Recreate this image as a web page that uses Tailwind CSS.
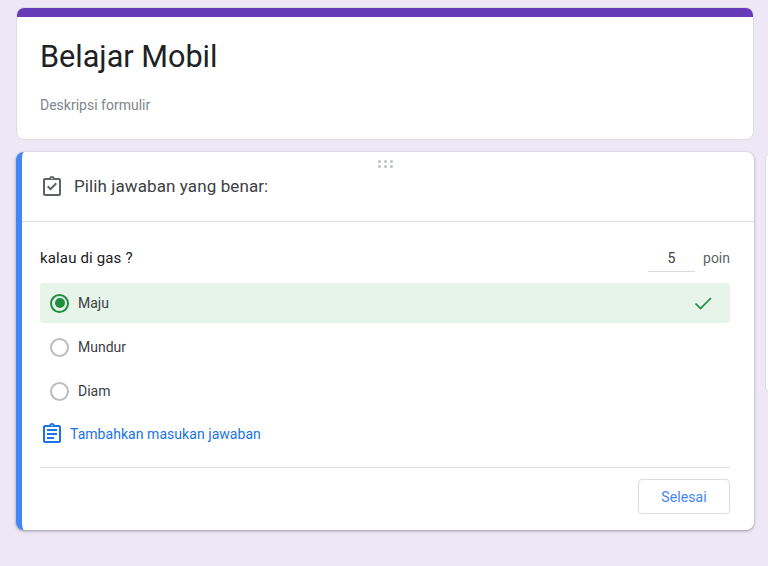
<!DOCTYPE html>
<html>
<head>
<meta charset="utf-8">
<script src="https://cdn.jsdelivr.net/npm/@tailwindcss/browser@4"></script>
</head>
<body class="m-0 h-[566px] w-[768px] overflow-hidden bg-[#ede7f6] font-['Roboto',sans-serif] text-[#202124]">
<div class="flex items-start pt-[7px] pl-4">
  <main class="flex w-[738px] shrink-0 flex-col gap-[12px]">
    <section class="h-[133px] overflow-hidden rounded-lg border border-[#dadce0] bg-white">
      <div class="-mx-px -mt-px h-[10px] bg-[#673ab7]"></div>
      <h1 class="mt-[20px] ml-[23px] text-[30.6px] leading-[40px] font-normal text-[#202124]">Belajar Mobil</h1>
      <p class="mt-[18px] ml-[23px] text-sm leading-5 text-[#80868b]">Deskripsi formulir</p>
    </section>
    <section class="relative h-[378px] rounded-lg border-l-[6px] border-[#4285f4] bg-white shadow-[0_1px_2px_0_rgba(60,64,67,0.3),0_1px_3px_1px_rgba(60,64,67,0.15)]">
      <div class="absolute top-[8px] left-[356px] grid grid-cols-3 gap-x-[3px] gap-y-[2px]">
        <i class="size-[3px] rounded-full bg-[#bdc1c6]"></i><i class="size-[3px] rounded-full bg-[#bdc1c6]"></i><i class="size-[3px] rounded-full bg-[#bdc1c6]"></i>
        <i class="size-[3px] rounded-full bg-[#bdc1c6]"></i><i class="size-[3px] rounded-full bg-[#bdc1c6]"></i><i class="size-[3px] rounded-full bg-[#bdc1c6]"></i>
      </div>
      <div class="flex h-[70px] items-center gap-[10px] border-b border-[#dadce0] pl-[18px]">
        <svg class="size-6 shrink-0" viewBox="0 0 24 24" fill="#5f6368"><path d="M19 3h-4.18C14.4 1.84 13.3 1 12 1s-2.4.84-2.82 2H5c-1.1 0-2 .9-2 2v14c0 1.1.9 2 2 2h14c1.1 0 2-.9 2-2V5c0-1.1-.9-2-2-2zm-7-.25c.41 0 .75.34.75.75s-.34.75-.75.75-.75-.34-.75-.75.34-.75.75-.75zM19 19H5V5h14v14zm-8.5-3.5-3.5-3.5 1.4-1.4 2.1 2.1 5.1-5.1 1.4 1.4z"/></svg>
        <h2 class="-mt-px text-[17px] leading-6 font-normal tracking-[0.1px] text-[#3c4043]">Pilih jawaban yang benar:</h2>
      </div>
      <div class="pr-[24px] pl-[18px]">
        <div class="flex h-[61px] items-center justify-between pt-[11px]">
          <span class="text-[15px] tracking-[0.15px] text-[#202124]">kalau di gas ?</span>
          <div class="flex items-center gap-2">
            <span class="block h-[28px] w-[47px] border-b border-[#dadce0] text-center text-sm leading-[29px] text-[#3c4043]">5</span>
            <span class="text-sm text-[#5f6368]">poin</span>
          </div>
        </div>
        <div class="flex h-10 items-center rounded-[3px] bg-[#e6f4ea] pr-[15px] pl-[10px]">
          <span class="flex size-[19px] items-center justify-center rounded-full border-2 border-[#1e8e3e]"><span class="size-[10px] rounded-full bg-[#1e8e3e]"></span></span>
          <span class="ml-[9px] flex-1 text-sm text-[#3c4043]">Maju</span>
          <svg class="size-6" viewBox="0 0 24 24" fill="none" stroke="#1e8e3e" stroke-width="1.7"><path d="M4.5 12.5l5 5L20 7"/></svg>
        </div>
        <div class="mt-[2px] flex h-11 items-center pl-[10px]">
          <span class="size-[19px] rounded-full border-2 border-[#bdbdbd]"></span>
          <span class="ml-[9px] text-sm text-[#3c4043]">Mundur</span>
        </div>
        <div class="flex h-11 items-center pl-[10px]">
          <span class="size-[19px] rounded-full border-2 border-[#bdbdbd]"></span>
          <span class="ml-[9px] text-sm text-[#3c4043]">Diam</span>
        </div>
        <div class="mt-[1px] flex h-[40px] items-center gap-[6px]">
          <svg class="size-6 shrink-0" viewBox="0 0 24 24" fill="#1a73e8"><path d="M19 3h-4.18C14.4 1.84 13.3 1 12 1s-2.4.84-2.82 2H5c-1.1 0-2 .9-2 2v14c0 1.1.9 2 2 2h14c1.1 0 2-.9 2-2V5c0-1.1-.9-2-2-2zm-7-.25c.41 0 .75.34.75.75s-.34.75-.75.75-.75-.34-.75-.75.34-.75.75-.75zM19 19H5V5h14v14zM7 7h10v2H7zm0 4h10v2H7zm0 4h7v2H7z"/></svg>
          <span class="text-sm tracking-[0.05px] text-[#1a73e8]">Tambahkan masukan jawaban</span>
        </div>
        <div class="mt-[13px] border-t border-[#dadce0]"></div>
        <div class="flex justify-end pt-[11px]">
          <button class="h-[35px] w-[92px] rounded border border-[#dadce0] bg-white text-sm tracking-[0.1px] text-[#4285f4]">Selesai</button>
        </div>
      </div>
    </section>
  </main>
  <aside class="mt-[145px] ml-[11px] h-[242px] w-[40px] shrink-0 rounded-lg border border-[#dadce0] bg-white"></aside>
</div>
</body>
</html>
